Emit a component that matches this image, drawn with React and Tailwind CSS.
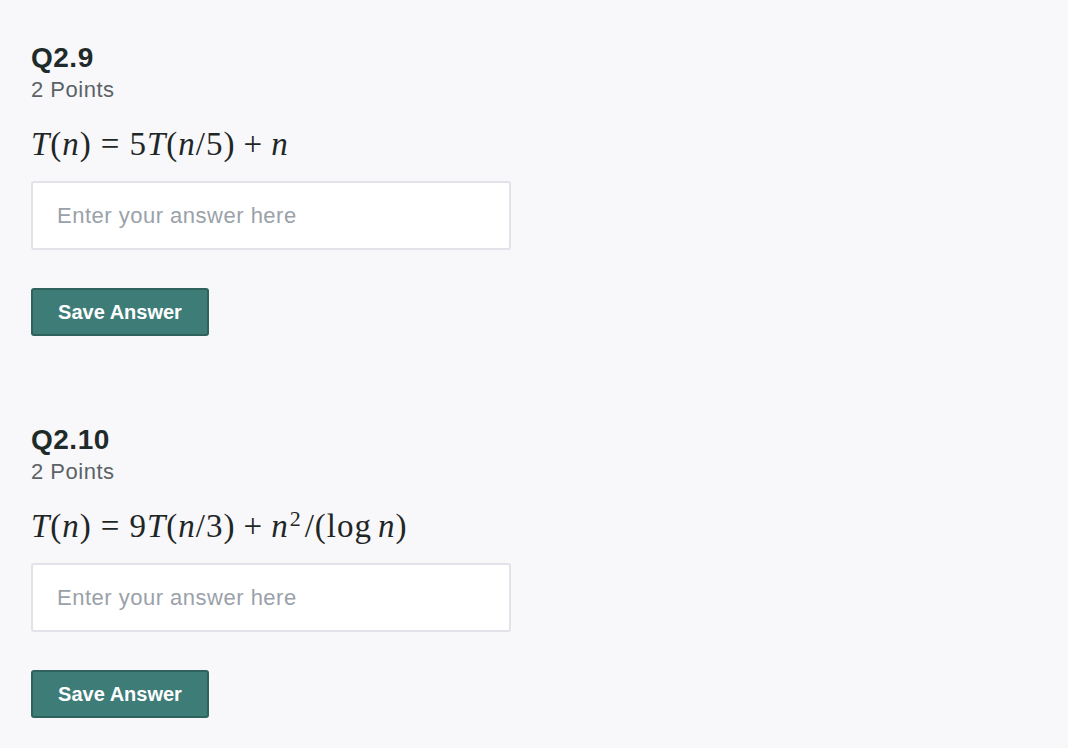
import React from 'react';

const sans = { fontFamily: '"Liberation Sans", Arial, sans-serif' };
const serif = { fontFamily: '"Liberation Serif", "DejaVu Serif", serif' };

function V({ children }) {
    return <span className="italic">{children}</span>;
}

function Op({ children, w = 'mx-[9px]' }) {
    return <span className={w}>{children}</span>;
}

function Question({ id, children }) {
    return (
        <section className="flex flex-col">
            <h2 className="text-[28px] leading-[32px] font-bold text-[#1f2b2b] tracking-[0.5px]">{id}</h2>
            <p className="mt-[2px] text-[22px] leading-[28px] text-[#5b6367] tracking-[0.5px]">2 Points</p>
            <div className="mt-[20px] text-[33px] leading-[41px] text-[#1f2626] tracking-[1px]" style={serif}>
                {children}
            </div>
            <div className="mt-[16px] w-[480px] h-[69px] bg-white border-2 border-[#e1e3e8] rounded-[3px] flex items-center pl-[24px]">
                <input
                    className="w-full outline-none bg-transparent text-[22px] tracking-[0.5px] placeholder:text-[#9aa1a9] text-[#333]"
                    style={sans}
                    placeholder="Enter your answer here"
                />
            </div>
            <button className="mt-[38px] w-[178px] h-[48px] bg-[#3e7c77] border-2 border-[#2f625d] rounded-[3px] text-white text-[20px] font-semibold flex items-center justify-center">
                Save Answer
            </button>
        </section>
    );
}

export default function App() {
    return (
        <div className="min-h-screen bg-[#f8f8fa] pl-[31px] pt-[42px] flex flex-col gap-[88px]" style={sans}>
            <Question id="Q2.9">
                <V>T</V>(<V>n</V>)<Op>=</Op>5<V>T</V>(<V>n</V>/5)<Op w="mx-[8px]">+</Op><V>n</V>
            </Question>
            <Question id="Q2.10">
                <V>T</V>(<V>n</V>)<Op>=</Op>9<V>T</V>(<V>n</V>/3)<Op w="mx-[8px]">+</Op><V>n</V>
                <sup className="text-[22px] ml-[1px] mr-[3px]">2</sup>/(log<span className="ml-[6px]"><V>n</V></span>)
            </Question>
        </div>
    );
}
